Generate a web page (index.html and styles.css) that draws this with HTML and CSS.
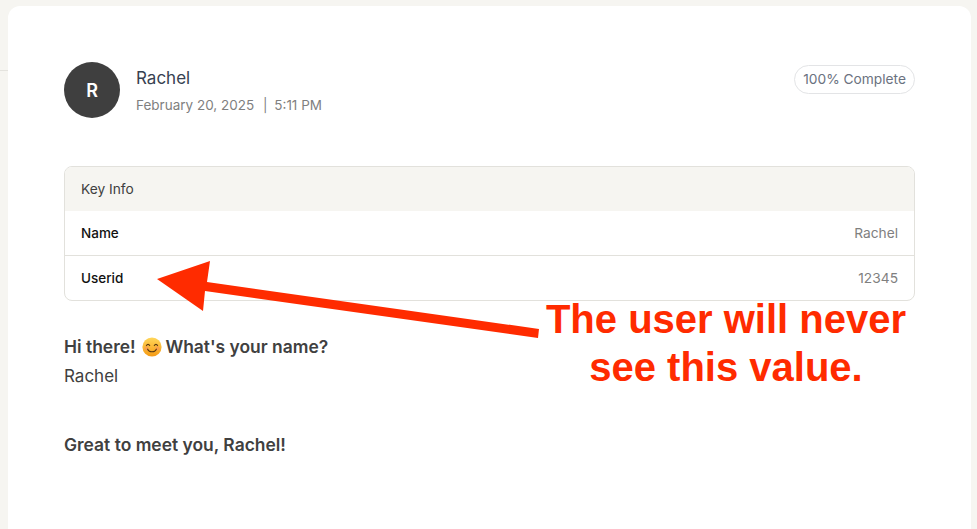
FILE: index.html
```html
<!DOCTYPE html>
<html lang="en">
<head>
    <meta charset="UTF-8">
    <meta name="viewport" content="width=device-width, initial-scale=1.0">
    <title>Response - Rachel</title>
    <link rel="stylesheet" href="styles.css">
</head>
<body>
    <div class="side-line"></div>
    <div class="card">
        <div class="header">
            <div class="avatar">R</div>
            <div class="who">
                <div class="name">Rachel</div>
                <div class="date">February 20, 2025 <span class="sep">|</span> 5:11 PM</div>
            </div>
            <div class="badge">100% Complete</div>
        </div>

        <div class="info">
            <div class="info-head">Key Info</div>
            <div class="info-row">
                <span class="info-key">Name</span>
                <span class="info-val">Rachel</span>
            </div>
            <div class="info-row">
                <span class="info-key">Userid</span>
                <span class="info-val">12345</span>
            </div>
        </div>

        <div class="chat">
            <div class="question">Hi there!
                <svg class="emoji" viewBox="0 0 20 20" aria-hidden="true">
                    <defs>
                        <linearGradient id="face" x1="0" y1="0" x2="0" y2="1">
                            <stop offset="0" stop-color="#ffd75a"/>
                            <stop offset="1" stop-color="#f59a14"/>
                        </linearGradient>
                    </defs>
                    <circle cx="10" cy="10" r="9.6" fill="url(#face)"/>
                    <circle cx="4.6" cy="11.4" r="2.2" fill="#f98f5c" opacity="0.55"/>
                    <circle cx="15.4" cy="11.4" r="2.2" fill="#f98f5c" opacity="0.55"/>
                    <path d="M4.4 8.6c.7-1.6 2.6-1.6 3.3 0M12.3 8.6c.7-1.6 2.6-1.6 3.3 0" fill="none" stroke="#5b3a12" stroke-width="1.1" stroke-linecap="round"/>
                    <path d="M5.6 12.2c1.8 3.4 7 3.4 8.8 0" fill="none" stroke="#5b3a12" stroke-width="1.1" stroke-linecap="round"/>
                </svg>
                What's your name?</div>
            <div class="answer">Rachel</div>
            <div class="question next">Great to meet you, Rachel!</div>
        </div>
    </div>

    <svg class="arrow" viewBox="0 0 977 529" aria-hidden="true">
        <polygon points="157,279 210,261 207,282 539,329 538,338 205,291 203,311"/>
    </svg>
    <div class="note">The user will never<br>see this value.</div>
</body>
</html>
```

FILE: styles.css
```css
html, body {
    height: 100%;
}
body {
    margin: 0;
    padding: 6px 6px 0 8px;
    box-sizing: border-box;
    background-color: #f6f5f1;
    font-family: Inter, "Noto Sans", sans-serif;
    overflow: hidden;
}
.side-line {
    position: absolute;
    left: 0;
    top: 70px;
    width: 8px;
    height: 1px;
    background: #e4e3de;
}
.card {
    background: white;
    border-radius: 12px 12px 0 0;
    height: 100%;
    box-sizing: border-box;
    padding: 56px 56px 0;
}
.header {
    display: flex;
    align-items: flex-start;
}
.avatar {
    width: 56px;
    height: 56px;
    border-radius: 50%;
    background: #3f3f3f;
    color: white;
    font-size: 18px;
    font-weight: 600;
    display: flex;
    align-items: center;
    justify-content: center;
    flex-shrink: 0;
}
.who {
    margin-left: 16px;
    flex: 1;
}
.name {
    font-size: 17px;
    line-height: 24px;
    margin-top: 4px;
    color: #374151;
}
.date {
    font-size: 13.5px;
    line-height: 20px;
    margin-top: 5px;
    color: #7f7f7f;
}
.sep {
    margin: 0 3px 0 5px;
}
.badge {
    margin-top: 3px;
    height: 29px;
    box-sizing: border-box;
    padding: 0 8px;
    border: 1px solid #e3e4e6;
    border-radius: 15px;
    font-size: 13.75px;
    line-height: 27px;
    color: #6b7280;
}
.info {
    margin-top: 48px;
    border: 1px solid #e2e1dc;
    border-radius: 8px;
    overflow: hidden;
}
.info-head {
    background: #f6f5f1;
    height: 44px;
    padding: 0 16px;
    font-size: 13.75px;
    line-height: 44px;
    color: #404040;
}
.info-row {
    display: flex;
    justify-content: space-between;
    align-items: center;
    height: 44px;
    padding: 0 16px;
    font-size: 13.75px;
}
.info-row + .info-row {
    border-top: 1px solid #e2e1dc;
}
.info-key {
    font-size: 13.5px;
    font-weight: 500;
    color: #111;
}
.info-val {
    color: #7f7f7f;
}
.chat {
    margin-top: 32px;
    color: #404040;
}
.question {
    font-size: 17.45px;
    line-height: 28px;
    font-weight: 600;
}
.question.next {
    margin-top: 41px;
}
.answer {
    font-size: 17px;
    line-height: 28px;
    margin-top: 1px;
}
.emoji {
    width: 20px;
    height: 20px;
    margin: 0 -1px 0 2px;
    vertical-align: -4px;
}
.arrow {
    position: absolute;
    left: 0;
    top: 0;
    width: 977px;
    height: 529px;
    pointer-events: none;
}
.arrow polygon {
    fill: #ff2b00;
}
.note {
    position: absolute;
    left: 526px;
    top: 295px;
    width: 400px;
    text-align: center;
    font-family: "Liberation Sans", Arial, sans-serif;
    font-size: 40px;
    line-height: 48px;
    font-weight: 700;
    color: #ff2b00;
}
```
